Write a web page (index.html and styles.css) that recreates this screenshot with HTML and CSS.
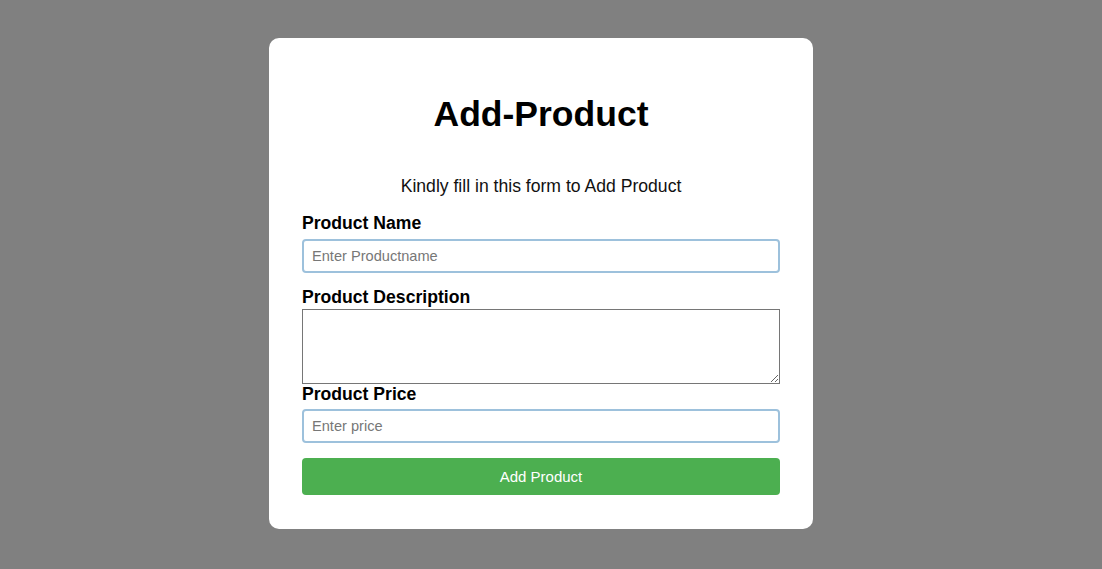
FILE: index.html
```html
<!DOCTYPE html>
<html lang="en">
<head>
<meta charset="utf-8">
<title>Add-Product</title>
<link rel="stylesheet" href="styles.css">
</head>
<body>
<main class="page">
  <form class="card">
    <h1 class="title">Add-Product</h1>
    <p class="subtitle">Kindly fill in this form to Add Product</p>
    <label class="label label-name" for="pname">Product Name</label>
    <input class="field" id="pname" type="text" placeholder="Enter Productname">
    <label class="label label-desc" for="pdesc">Product Description</label>
    <textarea class="area" id="pdesc"></textarea>
    <label class="label label-price" for="pprice">Product Price</label>
    <input class="field" id="pprice" type="text" placeholder="Enter price">
    <button class="submit" type="button">Add Product</button>
  </form>
</main>
</body>
</html>
```
FILE: styles.css
```css
html, body {
  margin: 0;
  padding: 0;
  background: #808080;
  font-family: "Liberation Sans", Arial, sans-serif;
}
.page {
  display: flex;
  justify-content: center;
  padding-top: 38px;
  padding-right: 20px;
  min-height: 569px;
  box-sizing: border-box;
}
.card {
  width: 544px;
  height: 491px;
  box-sizing: border-box;
  background: #fff;
  border-radius: 10px;
  padding: 0 33px;
  display: flex;
  flex-direction: column;
}
.title {
  margin: 56px 0 0;
  font-size: 35.5px;
  line-height: 40px;
  font-weight: bold;
  text-align: center;
  color: #000;
}
.subtitle {
  margin: 41px 0 0;
  font-size: 17.6px;
  line-height: 22px;
  text-align: center;
  color: #111;
}
.label {
  display: block;
  font-size: 17.6px;
  line-height: 20px;
  font-weight: bold;
  color: #000;
}
.label-name { margin-top: 16px; margin-bottom: 6px; }
.label-desc { margin-top: 14px; margin-bottom: 2px; }
.label-price { margin-top: 0; margin-bottom: 5px; }
.field {
  display: block;
  height: 34px;
  box-sizing: border-box;
  border: 2px solid #9dc1dc;
  border-radius: 4px;
  padding: 0 8px;
  font-family: "Liberation Sans", Arial, sans-serif;
  font-size: 14.6px;
  color: #333;
  outline: none;
  width: 100%;
}
.field::placeholder {
  color: #777;
}
.area {
  display: block;
  width: 100%;
  height: 75px;
  box-sizing: border-box;
  border: 1px solid #767676;
  border-radius: 0;
  margin: 0;
  resize: both;
  font-family: "Liberation Sans", Arial, sans-serif;
}
.submit {
  margin-top: 15px;
  height: 37px;
  width: 100%;
  border: none;
  border-radius: 4px;
  background: #4caf50;
  color: #fff;
  font-family: "Liberation Sans", Arial, sans-serif;
  font-size: 15px;
  cursor: pointer;
}
```
